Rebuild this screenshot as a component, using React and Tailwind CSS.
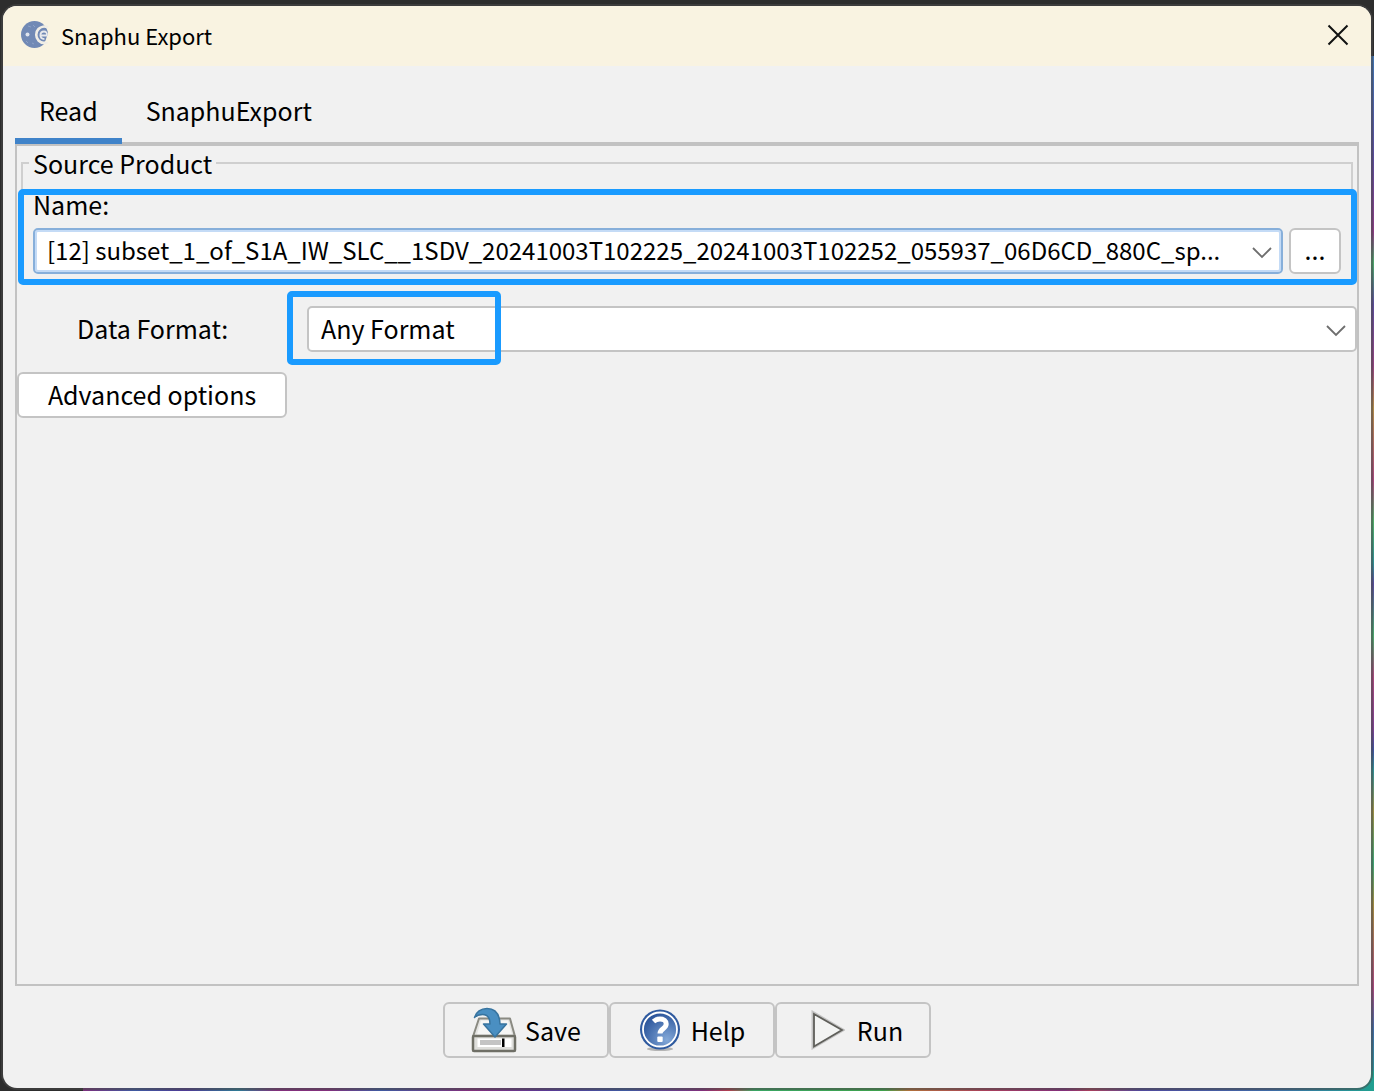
import { useState } from 'react';
import clsx from 'clsx';

const TABS = ['Read', 'SnaphuExport'];

const PRODUCT =
  '[12] subset_1_of_S1A_IW_SLC__1SDV_20241003T102225_20241003T102252_055937_06D6CD_880C_sp...';

function EsaLogo() {
  return (
    <svg viewBox="0 0 28 28" className="h-7 w-7" aria-hidden="true">
      <circle cx="13.5" cy="13.5" r="13.5" fill="#7189b5" />
      <path
        d="M27 6.500C24 5 20 5.500 17.500 8c-3 3-3 8.500 0 11.500 2.500 2.500 6 2.800 9 1.500"
        fill="none"
        stroke="#f0ede6"
        strokeWidth="2.600"
      />
      <path
        d="M19 14.500h7c.2-2.700-1-4-3-4-2.200 0-3.600 1.600-3.600 3.800 0 2.200 1.500 3.700 4 3.700"
        fill="none"
        stroke="#e8e9ec"
        strokeWidth="1.800"
      />
      <path d="M26 15h2v6h-4z" fill="#f9f3e1" />
      <circle cx="6.5" cy="13.5" r="2" fill="#dfe4ee" />
      <path d="M7 5l3 1M12 4l2 2M5 20l2 2M11 22l2 1" stroke="#8ea2c6" strokeWidth="1" />
    </svg>
  );
}

function SaveIcon() {
  return (
    <svg viewBox="0 0 46 46" className="h-[46px] w-[46px]" aria-hidden="true">
      <path d="M8 11.500h31l5 18v14H2v-14z" fill="#e4e4e2" stroke="#8a8a82" strokeWidth="2" strokeLinejoin="round" />
      <path d="M10 13.500h27l4 14H6z" fill="#f6f6f5" />
      <rect x="2" y="29" width="42" height="15" rx="1" fill="#dededb" stroke="#6f6f66" strokeWidth="2.500" />
      <rect x="6.500" y="31.500" width="34" height="8.500" fill="#fff" />
      <rect x="9" y="33" width="21" height="5" fill="#c4c4c4" />
      <rect x="31" y="31.500" width="2.500" height="8.500" fill="#000" />
      <path
        d="M3.500 10.500C5 5 10 1.500 16 1.500c8 0 12.500 5 13 15.500h6.500L24 30 12.500 17H19c0-6-2.500-9.500-7.500-9.500-3.500 0-6 1-8 3z"
        fill="#4a8fc2"
        stroke="#38749f"
        strokeWidth="1.500"
        strokeLinejoin="round"
      />
    </svg>
  );
}

function HelpIcon() {
  return (
    <svg viewBox="0 0 42 44" className="h-11 w-[42px]" aria-hidden="true">
      <defs>
        <radialGradient id="help-fill" cx="0.7" cy="0.8" r="0.8">
          <stop offset="0" stopColor="#83a8d8" />
          <stop offset="1" stopColor="#2c569c" />
        </radialGradient>
      </defs>
      <ellipse cx="21" cy="41" rx="13" ry="2" fill="#b4b4b4" />
      <circle cx="21" cy="21.500" r="20" fill="#2f5a9f" />
      <circle cx="21" cy="21.500" r="17" fill="url(#help-fill)" stroke="#fff" strokeWidth="1.800" />
      <path
        d="M14.500 13.500c1.800-1.600 4-2.400 6.500-2.400 4 0 6.200 1.900 6.200 4.900 0 4.700-6.200 4.700-6.200 9.500"
        fill="none"
        stroke="#fff"
        strokeWidth="5"
      />
      <rect x="18.300" y="28.500" width="5.400" height="5.500" rx="1" fill="#fff" />
    </svg>
  );
}

function RunIcon() {
  return (
    <svg viewBox="0 0 34 40" className="h-10 w-[34px]" aria-hidden="true">
      <path d="M2 2.500v35L32 20z" fill="#f3f4f3" stroke="#c4c4c4" strokeWidth="3" />
      <path d="M3 4v32.500L31 20z" fill="#f3f4f3" stroke="#5f5f5a" strokeWidth="1.800" />
    </svg>
  );
}

function Chevron() {
  return (
    <svg
      viewBox="0 0 20 12"
      className="pointer-events-none absolute right-[11px] top-[19px] h-3 w-5"
      aria-hidden="true"
    >
      <path d="M1 1l9 9 9-9" fill="none" stroke="#6e6e6e" strokeWidth="1.800" />
    </svg>
  );
}

function ComboBox({ id, options, focused, className }) {
  return (
    <div className={clsx('relative min-w-0', className)}>
      <select
        id={id}
        className={clsx(
          'block h-[46px] w-full appearance-none rounded-[5px] border-2 bg-white pb-0.5 pl-3 pr-10 leading-10 outline-none',
          focused ? 'border-[#87afda] text-[24px] ring-2 ring-inset ring-[#c4dbf6]' : 'border-[#c4c4c4]'
        )}
      >
        {options.map((option) => (
          <option key={option}>{option}</option>
        ))}
      </select>
      <Chevron />
    </div>
  );
}

function ActionButton({ icon, children, className }) {
  return (
    <button
      type="button"
      className={clsx('flex h-14 items-center justify-center rounded-md border-2 border-[#c4c4c4]', className)}
    >
      {icon}
      {children}
    </button>
  );
}

// Marker frame drawn on top of the controls
function Highlight({ className }) {
  return <div className={clsx('pointer-events-none absolute rounded-[5px] border-[6px] border-[#1a9bff]', className)} />;
}

export default function App() {
  const [activeTab, setActiveTab] = useState('Read');

  return (
    <div className="relative flex min-h-screen flex-col bg-[#2d2d2d] px-[3px] pb-[3px] pt-[6px] font-['Noto_Sans_CJK_SC','Noto_Sans',sans-serif] text-[25px] leading-7 text-black">
      {/* Map visible behind the window */}
      <div className="absolute bottom-0 right-0 top-14 w-5 bg-[linear-gradient(to_bottom,#3f73b0,#5a4a9c_10%,#8c3a84_17%,#4aa86a_20%,#5a4a9c_24%,#94417f_30%,#b08a48_34%,#a8467c_41%,#4fae68_45%,#2f8f94_49%,#574a9c_51%,#48a86c_56%,#a8467c_60%,#7c3f92_65%,#4050a0_67%,#2f8f94_69%,#9a8e44_73%,#3da574_78%,#a08a40_82%,#a8467c_90%,#3f6aa5_94%,#20a090)]" />
      <div className="absolute bottom-0 left-[83px] right-0 h-5 bg-[linear-gradient(to_right,#7c2f7c,#3f5aa0_4%,#4f3a94_8%,#2f7a94_12%,#82307c_15%,#82307c_19%,#3f5aa0_23%,#82307c_30%,#5a3a94_36%,#3f5aa0_42%,#82307c_48%,#b04050_50%,#3aa564_52%,#3fa04c_62%,#b0703c_64%,#a8405c_70%,#82307c_76%,#a8405c_78%,#4f4a9c_82%,#3f6aa5_92%,#20a090)]" />

      <main className="relative flex flex-1 flex-col overflow-hidden rounded-[14px] bg-[#f1f1f1] shadow-[0_0_0_2px_#4a4a4a88]">
        <header className="flex h-[60px] items-center gap-3 bg-[#f9f3e1] pb-0.5 pl-[18px] pr-[22px]">
          <EsaLogo />
          <h1 className="flex-1 text-[22px]">Snaphu Export</h1>
          <button type="button" aria-label="Close">
            <svg viewBox="0 0 22 22" className="h-[22px] w-[22px]" aria-hidden="true">
              <path d="M1.500 1.500l19 19M20.500 1.500l-19 19" stroke="#111" strokeWidth="2" />
            </svg>
          </button>
        </header>

        <div className="flex flex-1 flex-col px-3 pt-[18px]">
          <div role="tablist" className="relative z-10 -mb-0.5 flex">
            {TABS.map((tab) => (
              <button
                key={tab}
                type="button"
                role="tab"
                aria-selected={tab === activeTab}
                onClick={() => setActiveTab(tab)}
                className={clsx(
                  'h-[60px] border-b-[6px] px-6 pb-0.5',
                  tab === activeTab ? 'border-[#4083c9]' : 'border-transparent'
                )}
              >
                {tab}
              </button>
            ))}
          </div>

          <section className="flex-1 border-2 border-t-4 border-[#c2c2c2] pt-[3px]">
            <fieldset className="mx-1 min-w-0 border-2 border-[#cfcfcf]">
              <legend className="ml-1.5 px-1">Source Product</legend>
              <div className="relative px-2.5 pb-1.5 pt-[13px]">
                <label htmlFor="source-name">Name:</label>
                <div className="mt-2.5 flex gap-1.5">
                  <ComboBox id="source-name" options={[PRODUCT]} focused className="flex-1" />
                  <button type="button" className="h-[46px] w-[52px] rounded-md border-2 border-[#c4c4c4] bg-white pb-1">
                    ...
                  </button>
                </div>
                <Highlight className="-bottom-[5px] -left-[5px] -right-1.5 top-3" />
              </div>
            </fieldset>

            <div className="relative mt-6 flex items-center">
              <label htmlFor="data-format" className="w-[290px] pb-0.5 pl-[60px]">
                Data Format:
              </label>
              <ComboBox id="data-format" options={['Any Format']} className="flex-1" />
              <Highlight className="-bottom-[13px] -top-[15px] left-[270px] w-[214px]" />
            </div>

            <button type="button" className="mt-5 h-[46px] w-[270px] rounded-md border-2 border-[#c4c4c4] bg-white pb-0.5">
              Advanced options
            </button>
          </section>
        </div>

        <footer className="flex justify-center pb-[30px] pt-4">
          <ActionButton icon={<SaveIcon />} className="w-[166px] gap-2">
            Save
          </ActionButton>
          <ActionButton icon={<HelpIcon />} className="w-[166px] gap-2.5">
            Help
          </ActionButton>
          <ActionButton icon={<RunIcon />} className="w-[156px] gap-3 pl-2">
            Run
          </ActionButton>
        </footer>
      </main>
    </div>
  );
}
